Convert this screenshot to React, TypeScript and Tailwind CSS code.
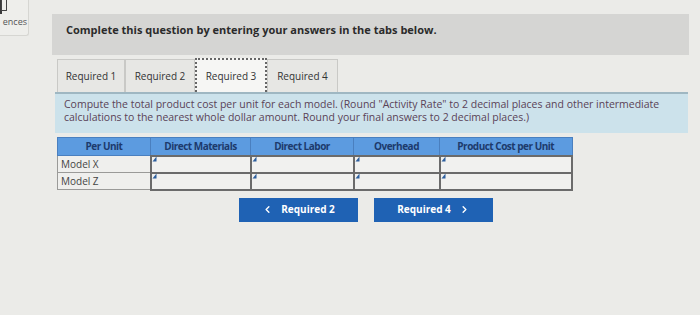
import React from "react";
import { ChevronLeft, ChevronRight } from "lucide-react";

const font = { fontFamily: '"Open Sans", "DejaVu Sans", sans-serif' };

function Cell() {
  return (
    <td className="relative border-2 border-[#6b6b6b] bg-[#f1f1ef] p-0">
      <span className="absolute left-0 top-0 h-0 w-0 border-l-[5px] border-t-[4px] border-l-transparent border-t-[#2d5f9e] rotate-90" />
    </td>
  );
}

export default function App() {
  const tabs = ["Required 1", "Required 2", "Required 3", "Required 4"];
  const widths = ["w-[68px]", "w-[70px]", "w-[72px]", "w-[71px]"];
  return (
    <div className="relative h-[315px] w-[700px] overflow-hidden bg-[#ebebe8]" style={font}>
      <div className="flex">
        {/* left sidebar fragment */}
        <div className="relative h-[36px] w-[29px] overflow-hidden rounded-br-[3px] border-b border-r border-[#d6d6d2] bg-[#eeeeeb]">
          <div className="absolute left-0 top-0 h-[14px] w-[2px] bg-[#3a3a3a]" />
          <div className="absolute left-[1px] top-0 h-[11px] w-[6px] rounded-b-[1px] border border-t-0 border-[#444]" />
          <div className="absolute right-[1px] top-[17px] text-[9px] leading-[10px] text-[#555]">ences</div>
        </div>
        {/* main */}
        <div className="ml-[23px] mt-[14px] flex flex-col">
          <div className="h-[41px] w-[637px] bg-[#d5d5d3] pl-[14px] pt-[8px] text-[11px] font-bold text-[#2b2b2b]">
            Complete this question by entering your answers in the tabs below.
          </div>
          <div className="ml-[5px] mt-[4px] flex h-[33px] items-end">
            {tabs.map((t, i) => (
              <div
                key={t}
                className={
                  i === 2
                    ? "flex h-[34px] w-[72px] items-center justify-center border-2 border-dotted border-[#666] border-b-0 bg-[#f6f6f4] text-[10px] text-[#333]"
                    : `flex h-[33px] ${widths[i]} items-center justify-center border border-b-0 border-[#c9c9c6] bg-[#e7e7e4] text-[10px] text-[#333]`
                }
              >
                {t}
              </div>
            ))}
          </div>
          <div className="ml-[3px] h-[41px] w-[633px] border-t-2 border-[#9fb7c2] bg-[#cce2eb] pl-[9px] pt-[4px] text-[10.5px] leading-[13px] text-[#5a4257]">
            Compute the total product cost per unit for each model. (Round "Activity Rate" to 2 decimal places and other intermediate calculations to the nearest whole dollar amount. Round your final answers to 2 decimal places.)
          </div>
          <table className="ml-[5px] mt-[4px] w-[516px] table-fixed border-collapse text-[10px]">
            <thead>
              <tr className="h-[18px] bg-[#5c9be0] text-[10px] tracking-[-0.5px] text-[#1d3a6c]">
                <th className="w-[93px] whitespace-nowrap border border-[#4a7fbf] p-0 font-bold">Per Unit</th>
                <th className="w-[100px] whitespace-nowrap border border-[#4a7fbf] p-0 font-bold">Direct Materials</th>
                <th className="w-[103px] whitespace-nowrap border border-[#4a7fbf] p-0 font-bold">Direct Labor</th>
                <th className="w-[86px] whitespace-nowrap border border-[#4a7fbf] p-0 font-bold">Overhead</th>
                <th className="whitespace-nowrap border border-[#4a7fbf] p-0 font-bold">Product Cost per Unit</th>
              </tr>
            </thead>
            <tbody>
              {["Model X", "Model Z"].map((m) => (
                <tr key={m} className="h-[17px]">
                  <td className="border border-[#9a9a98] bg-[#efefed] p-0 pl-[3px] text-[#444]">{m}</td>
                  <Cell />
                  <Cell />
                  <Cell />
                  <Cell />
                </tr>
              ))}
            </tbody>
          </table>
          <div className="ml-[187px] mt-[7px] flex gap-[16px]">
            <button className="flex h-[24px] w-[119px] items-center justify-center gap-[8px] bg-[#1f62b4] text-[10px] font-bold text-white">
              <ChevronLeft size={11} strokeWidth={3} />
              <span>Required 2</span>
            </button>
            <button className="flex h-[24px] w-[119px] items-center justify-center gap-[8px] bg-[#1f62b4] text-[10px] font-bold text-white">
              <span>Required 4</span>
              <ChevronRight size={11} strokeWidth={3} />
            </button>
          </div>
        </div>
      </div>
    </div>
  );
}
